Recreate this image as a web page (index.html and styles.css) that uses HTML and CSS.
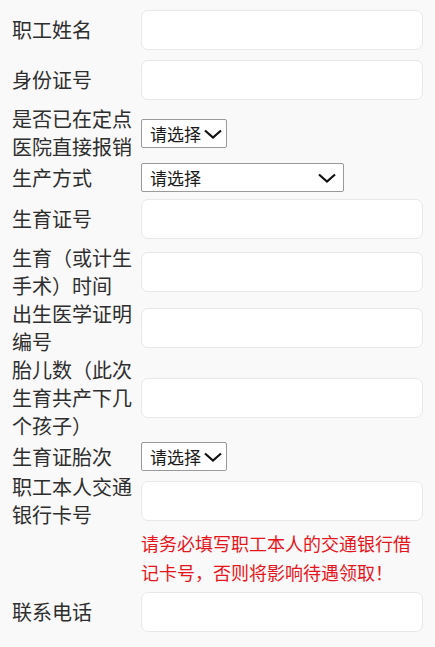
FILE: index.html
```html
<!DOCTYPE html>
<html lang="zh-CN">
<head>
  <meta charset="UTF-8" />
  <meta name="viewport" content="width=device-width, initial-scale=1.0"/>
  <title>生育津贴申请</title>
  <link rel="stylesheet" href="styles.css">
</head>
<body>
  <form class="form">
    <div class="row">
      <label class="label" for="name">职工姓名</label>
      <input class="field" type="text" id="name">
    </div>

    <div class="row">
      <label class="label" for="idcard">身份证号</label>
      <input class="field" type="text" id="idcard">
    </div>

    <div class="row">
      <label class="label" for="direct">是否已在定点医院直接报销</label>
      <span class="select-wrap">
        <select class="select select-small" id="direct">
          <option>请选择</option>
          <option>是</option>
          <option>否</option>
        </select>
        <svg class="arrow" width="18" height="10" viewBox="0 0 18 10"><path d="M1 1.5 L9 8.5 L17 1.5" fill="none" stroke="#111" stroke-width="2.2"/></svg>
      </span>
    </div>

    <div class="row">
      <label class="label" for="mode">生产方式</label>
      <span class="select-wrap">
        <select class="select select-wide" id="mode">
          <option>请选择</option>
          <option>顺产</option>
          <option>剖宫产</option>
        </select>
        <svg class="arrow" width="18" height="10" viewBox="0 0 18 10"><path d="M1 1.5 L9 8.5 L17 1.5" fill="none" stroke="#111" stroke-width="2.2"/></svg>
      </span>
    </div>

    <div class="row">
      <label class="label" for="cert">生育证号</label>
      <input class="field" type="text" id="cert">
    </div>

    <div class="row">
      <label class="label" for="date">生育（或计生手术）时间</label>
      <input class="field" type="text" id="date">
    </div>

    <div class="row">
      <label class="label" for="birth">出生医学证明编号</label>
      <input class="field" type="text" id="birth">
    </div>

    <div class="row">
      <label class="label" for="count">胎儿数（此次生育共产下几个孩子）</label>
      <input class="field" type="text" id="count">
    </div>

    <div class="row">
      <label class="label" for="order">生育证胎次</label>
      <span class="select-wrap">
        <select class="select select-small" id="order">
          <option>请选择</option>
          <option>一胎</option>
          <option>二胎</option>
          <option>三胎</option>
        </select>
        <svg class="arrow" width="18" height="10" viewBox="0 0 18 10"><path d="M1 1.5 L9 8.5 L17 1.5" fill="none" stroke="#111" stroke-width="2.2"/></svg>
      </span>
    </div>

    <div class="row">
      <label class="label" for="bank">职工本人交通银行卡号</label>
      <input class="field" type="text" id="bank">
    </div>

    <p class="note">请务必填写职工本人的交通银行借记卡号，否则将影响待遇领取！</p>

    <div class="row">
      <label class="label" for="phone">联系电话</label>
      <input class="field" type="tel" id="phone">
    </div>
  </form>
</body>
</html>
```

FILE: styles.css
```css
/* General Styles */
body {
  margin: 0;
  background-color: #f9f9f9;
  font-family: "Noto Sans CJK SC", "Noto Sans", sans-serif;
  color: #333;
}

.form {
  padding: 5px 12px 0 12px;
}

/* Rows */
.row {
  display: flex;
  align-items: center;
}

.label {
  flex: 0 0 129px;
  font-size: 20px;
  line-height: 28px;
  color: #2e2e2e;
}

.field {
  flex: 1;
  height: 40px;
  margin: 5px 0;
  border: 1px solid #e8e8e8;
  border-radius: 7px;
  background: white;
  box-sizing: border-box;
  font-size: 16px;
  padding: 0 10px;
  outline: none;
}

/* Selects */
.select-wrap {
  position: relative;
  display: inline-block;
  margin: 2px 0;
}

.select {
  -webkit-appearance: none;
  appearance: none;
  height: 29px;
  box-sizing: border-box;
  border: 1px solid #9a9a9a;
  border-radius: 2px;
  background: white;
  font-family: inherit;
  font-size: 17px;
  color: #1a1a1a;
  padding: 0 0 0 8px;
  display: block;
}

.select-small {
  width: 86px;
}

.select-wide {
  width: 203px;
}

.arrow {
  position: absolute;
  right: 5px;
  top: 10px;
  pointer-events: none;
}

.select-wide + .arrow {
  right: 8px;
}

/* Note */
.note {
  margin: 0 0 0 129px;
  font-size: 18px;
  line-height: 29px;
  color: #e8141b;
}
```
